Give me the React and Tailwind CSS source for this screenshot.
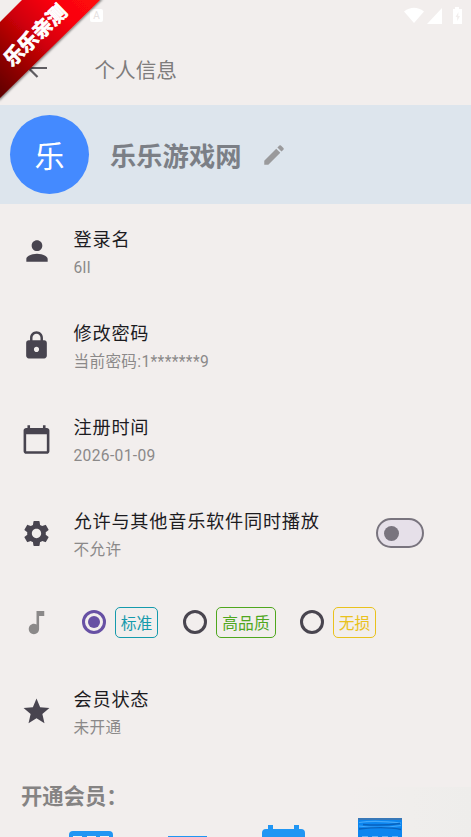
import { MdPerson, MdLock, MdCalendarToday, MdSettings, MdMusicNote, MdStar, MdEdit } from 'react-icons/md';

const Ribbon = () => (
  <svg className="absolute left-0 top-0 z-10" width="110" height="110" viewBox="0 0 110 110">
    <defs>
      <linearGradient id="ribbon" gradientUnits="userSpaceOnUse" x1="0" y1="99" x2="100" y2="0">
        <stop offset="0" stopColor="#5c0000" />
        <stop offset="0.22" stopColor="#8c0000" />
        <stop offset="0.5" stopColor="#d00508" />
        <stop offset="0.75" stopColor="#fa0508" />
        <stop offset="1" stopColor="#ff0808" />
      </linearGradient>
      <filter id="ribbonShadow" x="-10%" y="-10%" width="130%" height="130%">
        <feDropShadow dx="1" dy="1" stdDeviation="1" floodColor="#000" floodOpacity="0.5" />
      </filter>
    </defs>
    <path d="M24 -2H102L-2 100V24Z" fill="url(#ribbon)" filter="url(#ribbonShadow)" />
    <text
      transform="translate(12 67.500) rotate(-44)"
      fontSize="19.6"
      fontWeight="700"
      fill="#fff"
      stroke="#fff"
      strokeWidth="0.8"
    >
      乐乐亲测
    </text>
  </svg>
);

const StatusBar = () => (
  <div className="flex h-8 items-start justify-between pl-[90px] pr-[8px] pt-[7px]">
    <span className="mt-[2px] flex h-[13px] w-[13px] items-center justify-center rounded-xs bg-white text-[10px] leading-none text-[#e6e2e1]">
      A
    </span>
    <svg width="59" height="18" viewBox="0 0 59 18" fill="#fff">
      <path d="M0 4.5Q10 -3 20 4.5L10 16Z" />
      <path d="M38 1V17H23Z" />
      <path fillRule="evenodd" d="M51 0h4v2h3v15H49V2h2ZM54.500 5L51.500 10H53.200V14L56 9H54.200Z" />
    </svg>
  </div>
);

const Item = ({ icon: Icon, iconSize = 'size-8', title, sub, children }) => (
  <div className="flex h-[94px] items-center pl-[20.500px]">
    <div className="flex w-8 shrink-0 justify-center">
      <Icon className={`${iconSize} text-[#48444f]`} />
    </div>
    <div className="ml-[21px] flex-1 pt-[5px]">
      <div className="text-[18.2px] leading-[28px] tracking-[0.75px] text-[#1c1b1f]">{title}</div>
      <div className="text-[15.6px] leading-[28px] tracking-[0.35px] text-[#8b8989]">{sub}</div>
    </div>
    {children}
  </div>
);

const Radio = ({ checked }) => (
  <span
    className={`flex size-6 shrink-0 items-center justify-center rounded-full border-[3px] ${
      checked ? 'border-[#6750a4]' : 'border-[#49454f]'
    }`}
  >
    {checked && <span className="size-3 rounded-full bg-[#6750a4]" />}
  </span>
);

const qualities = [
  { label: '标准', box: 'w-[43px] border-[#159aac] text-[#159aac]', gap: 'ml-[30px]', checked: true },
  { label: '高品质', box: 'w-[60px] border-[#4fa71e] text-[#4fa71e]', gap: 'ml-[25px]' },
  { label: '无损', box: 'w-[43px] border-[#e9c21d] text-[#e9c21d]', gap: 'ml-[24px]' },
];

const App = () => {
  return (
    <div className="relative h-[837px] w-[471px] overflow-hidden bg-[#f2eeed] font-[Roboto,'Noto_Sans_CJK_SC',sans-serif]">
      <Ribbon />
      <StatusBar />

      <header className="flex h-[73px] items-center pl-[26px]">
        <svg className="-mt-[2px]" width="22" height="22" viewBox="0 0 22 22" fill="none" stroke="#5f5c61" strokeWidth="2.2">
          <path d="M21 11H3M11.500 20L2.500 11L11.500 2" />
        </svg>
        <h1 className="ml-[46.500px] pt-[6px] text-[20.6px] leading-none text-[#7e7c7c]">个人信息</h1>
      </header>

      <section className="flex h-[99px] items-center bg-[#dde5ed] pl-[10px]">
        <div className="flex size-[79px] items-center justify-center rounded-full bg-[#448aff] pt-[3px] text-[30px] text-white">乐</div>
        <div className="ml-[21px] pt-[7px] text-[26.3px] font-bold text-[#7b7f86]">乐乐游戏网</div>
        <MdEdit className="ml-[20px] size-[26px] text-[#9a9a9c]" />
      </section>

      <Item icon={MdPerson} title="登录名" sub="6ll" />
      <Item icon={MdLock} iconSize="size-[31px]" title="修改密码" sub="当前密码:1*******9" />
      <Item icon={MdCalendarToday} iconSize="size-[31px]" title="注册时间" sub="2026-01-09" />
      <Item icon={MdSettings} iconSize="size-[31px]" title="允许与其他音乐软件同时播放" sub="不允许">
        <div className="mr-[47px] flex h-[30px] w-[48px] items-center rounded-full border-2 border-[#79747e] bg-[#e6e0e9] pl-[6px]">
          <span className="size-[15px] rounded-full bg-[#79747e]" />
        </div>
      </Item>

      <div className="flex h-[84px] items-center pl-[21px]">
        <MdMusicNote className="size-[31px] text-[#8b8989]" />
        {qualities.map((q) => (
          <div key={q.label} className={`flex items-center gap-[9px] ${q.gap}`}>
            <Radio checked={q.checked} />
            <span className={`flex h-[31px] items-center justify-center rounded-[5px] border pt-[3px] text-[15.8px] leading-none ${q.box}`}>
              {q.label}
            </span>
          </div>
        ))}
      </div>

      <Item icon={MdStar} iconSize="size-[31px]" title="会员状态" sub="未开通" />

      <h2 className="mt-[22px] pl-[21px] text-[21.3px] font-bold leading-[34px] text-[#858383]">开通会员：</h2>

      {/* Gói thành viên */}
      <div className="mt-[3px] flex h-[20px]">
        <svg className="shrink-0 overflow-visible" width="471" height="20" viewBox="0 0 471 20">
          <defs>
            <linearGradient id="haze" x1="0" x2="1" y1="0" y2="0">
              <stop offset="0" stopColor="#f0eeec" stopOpacity="0" />
              <stop offset="0.5" stopColor="#f0eeec" />
              <stop offset="1" stopColor="#eeedeb" />
            </linearGradient>
          </defs>
          <path d="M350 -30H471V20H350Z" fill="url(#haze)" />
          <rect x="69" y="14" width="44" height="12" rx="4" fill="#2196f3" />
          <path d="M73 19h9v1h-9ZM87 19h9v1h-9ZM100 19h9v1h-9Z" fill="#f2eeed" />
          <path d="M168 19h39v1h-39Z" fill="#2196f3" />
          <path d="M262 20V16q0-4 4-4h2V8h5v4h21V8h5v4h2q4 0 4 4v4Z" fill="#2196f3" />
          <path d="M358 1h44v19H358Z" fill="#0c86f0" />
          <path d="M358 1h44v2H358Z" fill="#3878b8" />
          <path d="M359 5.500Q375 3 401 6M359 9Q378 12 401 8.500" fill="none" stroke="#45a9fa" strokeWidth="1.2" />
          <path d="M363 7.500Q382 9 400 6.500M359 12Q385 9 401 12.500" fill="none" stroke="#0862be" strokeWidth="1.4" />
          <path d="M362 19.500h40" stroke="#63b5f7" strokeWidth="1" strokeDasharray="6 4" />
        </svg>
      </div>
    </div>
  );
};

export default App;
